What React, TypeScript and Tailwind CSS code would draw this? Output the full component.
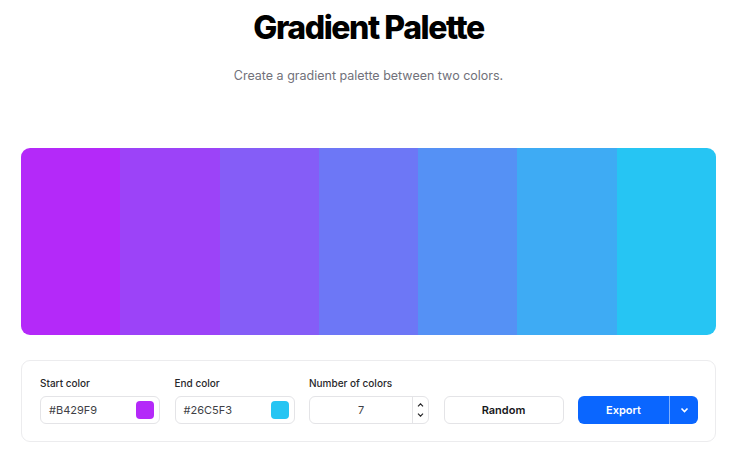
import React from "react";

const colors = ["#B429F9", "#9C43F8", "#855DF7", "#6D77F6", "#5591F5", "#3EABF4", "#26C5F3"];

function Label({ children }: { children: React.ReactNode }) {
  return <div className="text-[10px] font-medium text-[#27272a] leading-[12px] mb-[7px]">{children}</div>;
}

function ColorInput({ label, value }: { label: string; value: string }) {
  return (
    <div>
      <Label>{label}</Label>
      <div className="h-[28px] border border-[#e4e4e7] rounded-[6px] flex items-center justify-between pl-[8px] pr-[5px]">
        <span className="text-[11px] text-[#3f3f46]">{value}</span>
        <span className="w-[18px] h-[18px] rounded-[4px]" style={{ backgroundColor: value }} />
      </div>
    </div>
  );
}

export default function App() {
  return (
    <div className="w-[750px] h-[463px] bg-white overflow-hidden" style={{ fontFamily: "Inter, 'Noto Sans', sans-serif" }}>
      <div className="w-[737px] flex flex-col items-center pt-[12px]">
        <h1 className="text-[32px] font-extrabold leading-[32px] tracking-[-0.045em] text-black">Gradient Palette</h1>
        <p className="mt-[24px] text-[12.5px] text-[#71717a] leading-[16px]">Create a gradient palette between two colors.</p>
      </div>
      <div className="ml-[21px] w-[695px] mt-[64px] h-[187px] flex rounded-[9px] overflow-hidden">
        {colors.map((c) => (
          <div key={c} className="flex-1" style={{ backgroundColor: c }} />
        ))}
      </div>
      <div className="ml-[21px] w-[695px] mt-[25px] border border-[#ececee] rounded-[9px] pt-[16px] pb-[17px] pl-[18px] pr-[17px] grid grid-cols-5 gap-x-[14.5px] items-end">
        <ColorInput label="Start color" value="#B429F9" />
        <ColorInput label="End color" value="#26C5F3" />
        <div>
          <Label>Number of colors</Label>
          <div className="h-[28px] border border-[#e4e4e7] rounded-[6px] flex">
            <div className="flex-1 flex items-center justify-center text-[11px] text-[#3f3f46]">7</div>
            <div className="w-[16px] border-l border-[#e4e4e7] flex flex-col items-center justify-between py-[6px]">
              <svg width="7" height="4" viewBox="0 0 7 4"><path d="M1 3.3 L3.5 0.8 L6 3.3" fill="none" stroke="#27272a" strokeWidth="1.2" /></svg>
              <svg width="7" height="4" viewBox="0 0 7 4"><path d="M1 0.7 L3.5 3.2 L6 0.7" fill="none" stroke="#27272a" strokeWidth="1.2" /></svg>
            </div>
          </div>
        </div>
        <button className="h-[28px] border border-[#e4e4e7] rounded-[6px] text-[11px] font-semibold text-[#18181b] bg-white">Random</button>
        <div className="h-[28px] flex rounded-[6px] overflow-hidden bg-[#0a66ff]">
          <button className="flex-1 text-[11px] font-semibold text-white">Export</button>
          <div className="w-px bg-[#7fb0ff]" />
          <div className="w-[28px] flex items-center justify-center">
            <svg width="9" height="6" viewBox="0 0 9 6"><path d="M1.5 1.5 L4.5 4.5 L7.5 1.5" fill="none" stroke="white" strokeWidth="1.6" /></svg>
          </div>
        </div>
      </div>
    </div>
  );
}
